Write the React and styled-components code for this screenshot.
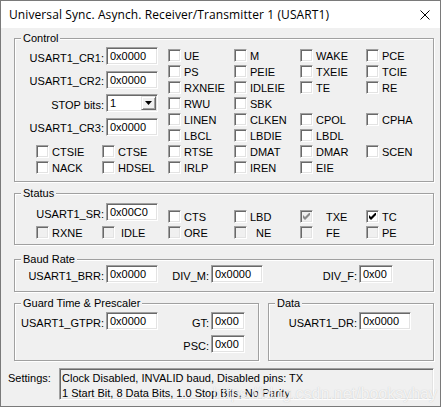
import React from 'react';
import styled, { createGlobalStyle } from 'styled-components';

const GlobalStyle = createGlobalStyle`
  body {
    margin: 0;
    background: #fff;
    font-family: "Liberation Sans", Arial, sans-serif;
  }
`;

const Window = styled.div`
  position: relative;
  width: 441px;
  height: 407px;
  box-sizing: border-box;
  border: 1px solid #7a7a7a;
  background: #f0f0f0;
  font-family: "Liberation Sans", Arial, sans-serif;
  font-size: 11px;
  color: #000;
  overflow: hidden;
`;

const TitleBar = styled.div`
  height: 27px;
  background: #fff;
  display: flex;
  align-items: center;
  justify-content: space-between;
  padding: 0 10px 0 8px;
  font-family: "Open Sans", "Noto Sans", sans-serif;
  font-size: 12px;
  letter-spacing: 0.1px;
`;

const Client = styled.div`
  padding: 10px 6px 6px 7px;
`;

// etched frame with a caption sitting on the top line
const Group = styled.div`
  position: relative;
  box-sizing: border-box;
  width: ${p => p.$w}px;
  margin: ${p => p.$mt || 0}px 0 0 ${p => (p.$ml === undefined ? 6 : p.$ml)}px;
  padding: ${p => p.$pad};
  border: 1px solid #a0a0a0;
  box-shadow: inset 1px 1px 0 #fff, 1px 1px 0 #fff;
`;

const Legend = styled.span`
  position: absolute;
  top: -7px;
  left: 6px;
  padding: 0 2px;
  line-height: 13px;
  background: #f0f0f0;
`;

const GroupRow = styled.div`
  display: flex;
  gap: 9px;
  margin: 11px 0 0 6px;
`;

const sunken = `
  box-sizing: border-box;
  border-style: solid;
  border-width: 1px;
  border-color: #a0a0a0 #fff #fff #a0a0a0;
  box-shadow: inset 1px 1px 0 #696969, inset -1px -1px 0 #e3e3e3;
`;

const Field = styled.div`
  display: grid;
  grid-template-columns: ${p => p.$lw}px ${p => p.$bw}px;
  align-items: center;
  height: 18px;
`;

const FieldLabel = styled.span`
  text-align: right;
  padding: 3px 2px 0 0;
  white-space: nowrap;
`;

const TextBox = styled.div`
  ${sunken}
  height: 18px;
  padding-left: 3px;
  line-height: 16px;
  background: #fff;
  white-space: nowrap;
  overflow: hidden;
`;

const Combo = styled(TextBox)`
  display: flex;
  justify-content: space-between;
  padding: 1px 1px 1px 3px;
  line-height: 14px;
`;

const DropButton = styled.span`
  box-sizing: border-box;
  width: 15px;
  height: 14px;
  background: #f0f0f0;
  border-style: solid;
  border-width: 1px;
  border-color: #e3e3e3 #696969 #696969 #e3e3e3;
  box-shadow: inset 1px 1px 0 #fff, inset -1px -1px 0 #a0a0a0;
  display: flex;
  align-items: center;
  justify-content: center;
`;

const FlagGrid = styled.div`
  display: grid;
  grid-template-columns: 21px repeat(6, 66px);
  grid-template-rows: ${p => p.$rows};
`;

const FieldStack = styled.div`
  grid-column: 1 / 4;
  grid-row: 1 / 7;
  display: flex;
  flex-direction: column;
  gap: 5.5px;
`;

const FieldCell = styled.div`
  grid-column: 1 / 4;
  grid-row: 1;
  align-self: start;
`;

const Check = styled.div`
  grid-column: ${p => p.$col};
  grid-row: ${p => p.$row};
  align-self: ${p => p.$align || 'center'};
  display: flex;
  align-items: center;
  height: 16px;
  white-space: nowrap;
`;

const Box = styled.span`
  ${sunken}
  flex: none;
  width: 13px;
  height: 13px;
  background: ${p => (p.$disabled ? '#f0f0f0' : '#fff')};
  display: flex;
  align-items: center;
  justify-content: center;
`;

const CheckText = styled.span`
  margin-left: ${p => (p.$gap === undefined ? 3 : p.$gap)}px;
  padding-top: 1px;
`;

const GuardGrid = styled.div`
  display: grid;
  grid-template-columns: 91px 52px 53px 34px;
  grid-template-rows: 18px 18px;
  row-gap: 5px;
  align-items: center;
`;

const GridBox = styled(TextBox)`
  grid-column: ${p => p.$col};
  grid-row: ${p => p.$row};
`;

const GridLabel = styled(FieldLabel)`
  grid-column: ${p => p.$col};
  grid-row: ${p => p.$row};
`;

const BaudRow = styled.div`
  display: flex;
`;

const SettingsRow = styled.div`
  display: flex;
  margin-top: 7px;
`;

const SettingsLabel = styled.span`
  width: 51px;
  padding-top: 3px;
  line-height: 15px;
`;

const SettingsBox = styled.div`
  ${sunken}
  width: 375px;
  height: 32px;
  padding: 2px 0 0 2px;
  line-height: 15px;
  background: #f0f0f0;
  white-space: nowrap;
`;

const Watermark = styled.span`
  position: absolute;
  right: 3px;
  bottom: 3px;
  font-size: 16px;
  color: rgba(255, 255, 255, 0.8);
  text-shadow: 0 0 1px rgba(110, 110, 110, 0.35);
  pointer-events: none;
`;

const CheckMark = ({ color }) => (
  <svg width="7" height="7" viewBox="0 0 7 7">
    <polygon points="0,2 2,4 7,-1 7,2 2,7 0,5" fill={color} />
  </svg>
);

const Flag = ({ name, col, row, align, disabled, checked, gap }) => (
  <Check $col={col} $row={row} $align={align}>
    <Box $disabled={disabled}>
      {checked && <CheckMark color={disabled ? '#8a8a8a' : '#000'} />}
    </Box>
    <CheckText $gap={gap}>{name}</CheckText>
  </Check>
);

const controlFlags = [
  ['UE', 'M', 'WAKE', 'PCE'],
  ['PS', 'PEIE', 'TXEIE', 'TCIE'],
  ['RXNEIE', 'IDLEIE', 'TE', 'RE'],
  ['RWU', 'SBK'],
  ['LINEN', 'CLKEN', 'CPOL', 'CPHA'],
  ['LBCL', 'LBDIE', 'LBDL'],
];

const controlLower = [
  ['CTSIE', 'CTSE', 'RTSE', 'DMAT', 'DMAR', 'SCEN'],
  ['NACK', 'HDSEL', 'IRLP', 'IREN', 'EIE'],
];

const statusTop = [
  { name: 'CTS', col: 4 },
  { name: 'LBD', col: 5 },
  { name: 'TXE', col: 6, disabled: true, checked: true, gap: 13 },
  { name: 'TC', col: 7, checked: true },
];

const statusBottom = [
  { name: 'RXNE', col: 2 },
  { name: 'IDLE', col: 3, gap: 6 },
  { name: 'ORE', col: 4 },
  { name: 'NE', col: 5, gap: 9 },
  { name: 'FE', col: 6, gap: 13 },
  { name: 'PE', col: 7 },
];

const Reg = ({ label, value, lw = 91, bw = 52 }) => (
  <Field $lw={lw} $bw={bw}>
    <FieldLabel>{label}</FieldLabel>
    <TextBox>{value}</TextBox>
  </Field>
);

const App = () => {
  return (
    <Window>
      <GlobalStyle />
      <TitleBar>
        <span>Universal Sync. Asynch. Receiver/Transmitter 1 (USART1)</span>
        <svg width="10" height="10" viewBox="0 0 10 10">
          <path d="M0.5 0.5 L9.5 9.5 M9.5 0.5 L0.5 9.5" stroke="#000" strokeWidth="1" />
        </svg>
      </TitleBar>

      <Client>
        <Group $w={420} $pad="8px 0 6px 0">
          <Legend>Control</Legend>
          <FlagGrid $rows="repeat(8, 16px)">
            <FieldStack>
              <Reg label="USART1_CR1:" value="0x0000" />
              <Reg label="USART1_CR2:" value="0x0000" />
              <Field $lw={91} $bw={52}>
                <FieldLabel>STOP bits:</FieldLabel>
                <Combo>
                  <span>1</span>
                  <DropButton>
                    <svg width="7" height="4" viewBox="0 0 7 4">
                      <polygon points="0,0 7,0 3.5,4" fill="#000" />
                    </svg>
                  </DropButton>
                </Combo>
              </Field>
              <Reg label="USART1_CR3:" value="0x0000" />
            </FieldStack>
            {controlFlags.map((names, r) =>
              names.map((n, c) => <Flag key={n} name={n} col={c + 4} row={r + 1} />)
            )}
            {controlLower.map((names, r) =>
              names.map((n, c) => <Flag key={n} name={n} col={c + 2} row={r + 7} />)
            )}
          </FlagGrid>
        </Group>

        <Group $w={420} $mt={11} $pad="9px 0 4px 0">
          <Legend>Status</Legend>
          <FlagGrid $rows="21px 16px">
            <FieldCell>
              <Reg label="USART1_SR:" value="0x00C0" />
            </FieldCell>
            {statusTop.map(f => (
              <Flag key={f.name} {...f} row={1} align="end" />
            ))}
            {statusBottom.map(f => (
              <Flag key={f.name} {...f} row={2} disabled />
            ))}
          </FlagGrid>
        </Group>

        <Group $w={420} $mt={14} $pad="5px 0 8px 0">
          <Legend>Baud Rate</Legend>
          <BaudRow>
            <Reg label="USART1_BRR:" value="0x0000" />
            <Reg label="DIV_M:" value="0x0000" lw={53} />
            <Reg label="DIV_F:" value="0x00" lw={96} bw={34} />
          </BaudRow>
        </Group>

        <GroupRow>
          <Group $w={245} $ml={0} $pad="8px 0 7px 0">
            <Legend>Guard Time &amp; Prescaler</Legend>
            <GuardGrid>
              <GridLabel $col={1} $row={1}>USART1_GTPR:</GridLabel>
              <GridBox $col={2} $row={1}>0x0000</GridBox>
              <GridLabel $col={3} $row={1}>GT:</GridLabel>
              <GridBox $col={4} $row={1}>0x00</GridBox>
              <GridLabel $col={3} $row={2}>PSC:</GridLabel>
              <GridBox $col={4} $row={2}>0x00</GridBox>
            </GuardGrid>
          </Group>
          <Group $w={166} $ml={0} $pad="8px 0 23px 0">
            <Legend>Data</Legend>
            <Reg label="USART1_DR:" value="0x0000" lw={90} />
          </Group>
        </GroupRow>

        <SettingsRow>
          <SettingsLabel>Settings:</SettingsLabel>
          <SettingsBox>
            Clock Disabled, INVALID baud, Disabled pins: TX
            <br />
            1 Start Bit, 8 Data Bits, 1.0 Stop Bits, No Parity
          </SettingsBox>
        </SettingsRow>
      </Client>

      <Watermark>https://blog.csdn.net/booksyhay</Watermark>
    </Window>
  );
};

export default App;
